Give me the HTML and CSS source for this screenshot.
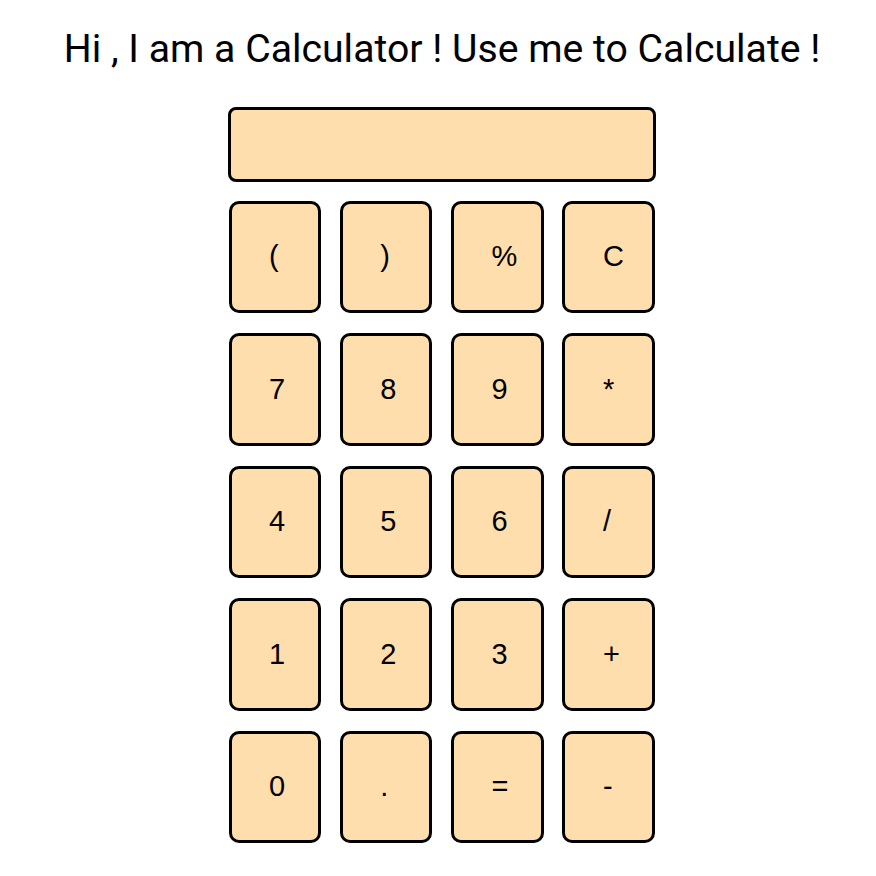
FILE: index.html
```html
<!DOCTYPE html>
<html lang="en">
<head>
  <meta charset="UTF-8" />
  <meta name="viewport" content="width=device-width, initial-scale=1.0"/>
  <title>Calculator</title>
  <link rel="stylesheet" href="styles.css">
</head>
<body>
  <h1>Hi , I am a Calculator ! Use me to Calculate !</h1>
  <div class="calculator">
    <input type="text" class="display" id="display" readonly>
    <div class="keys">
      <button>(</button>
      <button>)</button>
      <button>%</button>
      <button>C</button>
      <button>7</button>
      <button>8</button>
      <button>9</button>
      <button>*</button>
      <button>4</button>
      <button>5</button>
      <button>6</button>
      <button>/</button>
      <button>1</button>
      <button>2</button>
      <button>3</button>
      <button>+</button>
      <button>0</button>
      <button>.</button>
      <button>=</button>
      <button>-</button>
    </div>
  </div>
  <script>
    const display = document.getElementById('display');
    document.querySelectorAll('.keys button').forEach(btn => {
      btn.onclick = () => {
        const key = btn.textContent;
        if (key === 'C') {
          display.value = '';
        } else if (key === '=') {
          try {
            display.value = eval(display.value);
          } catch (e) {
            display.value = 'Error';
          }
        } else {
          display.value += key;
        }
      };
    });
  </script>
</body>
</html>
```

FILE: styles.css
```css
body {
  margin: 0;
  background: #fff;
  font-family: Roboto, sans-serif;
  display: flex;
  flex-direction: column;
  align-items: center;
}
h1 {
  font-weight: normal;
  font-size: 39.2px;
  margin: 26px 0 35px 8px;
  color: #000;
  white-space: nowrap;
}
.calculator {
  width: 428px;
  margin-left: 7px;
}
.display {
  display: block;
  box-sizing: border-box;
  width: 428px;
  height: 75px;
  background: #ffdead;
  border: 3px solid #000;
  border-radius: 8px;
  font-size: 28px;
  padding: 0 12px;
  outline: none;
}
.keys {
  display: grid;
  grid-template-columns: repeat(4, 92.5px);
  grid-auto-rows: 112.5px;
  column-gap: 18.8px;
  row-gap: 20px;
  margin-top: 18.5px;
  padding-left: 1px;
}
.keys button {
  background: #ffdead;
  border: 3px solid #000;
  border-radius: 10px;
  padding: 0 0 0 37.5px;
  text-align: left;
  font-family: "Liberation Sans", Arial, sans-serif;
  font-size: 29px;
  color: #000;
  cursor: pointer;
}
.keys button:hover {
  background: #f5cf94;
}
```
